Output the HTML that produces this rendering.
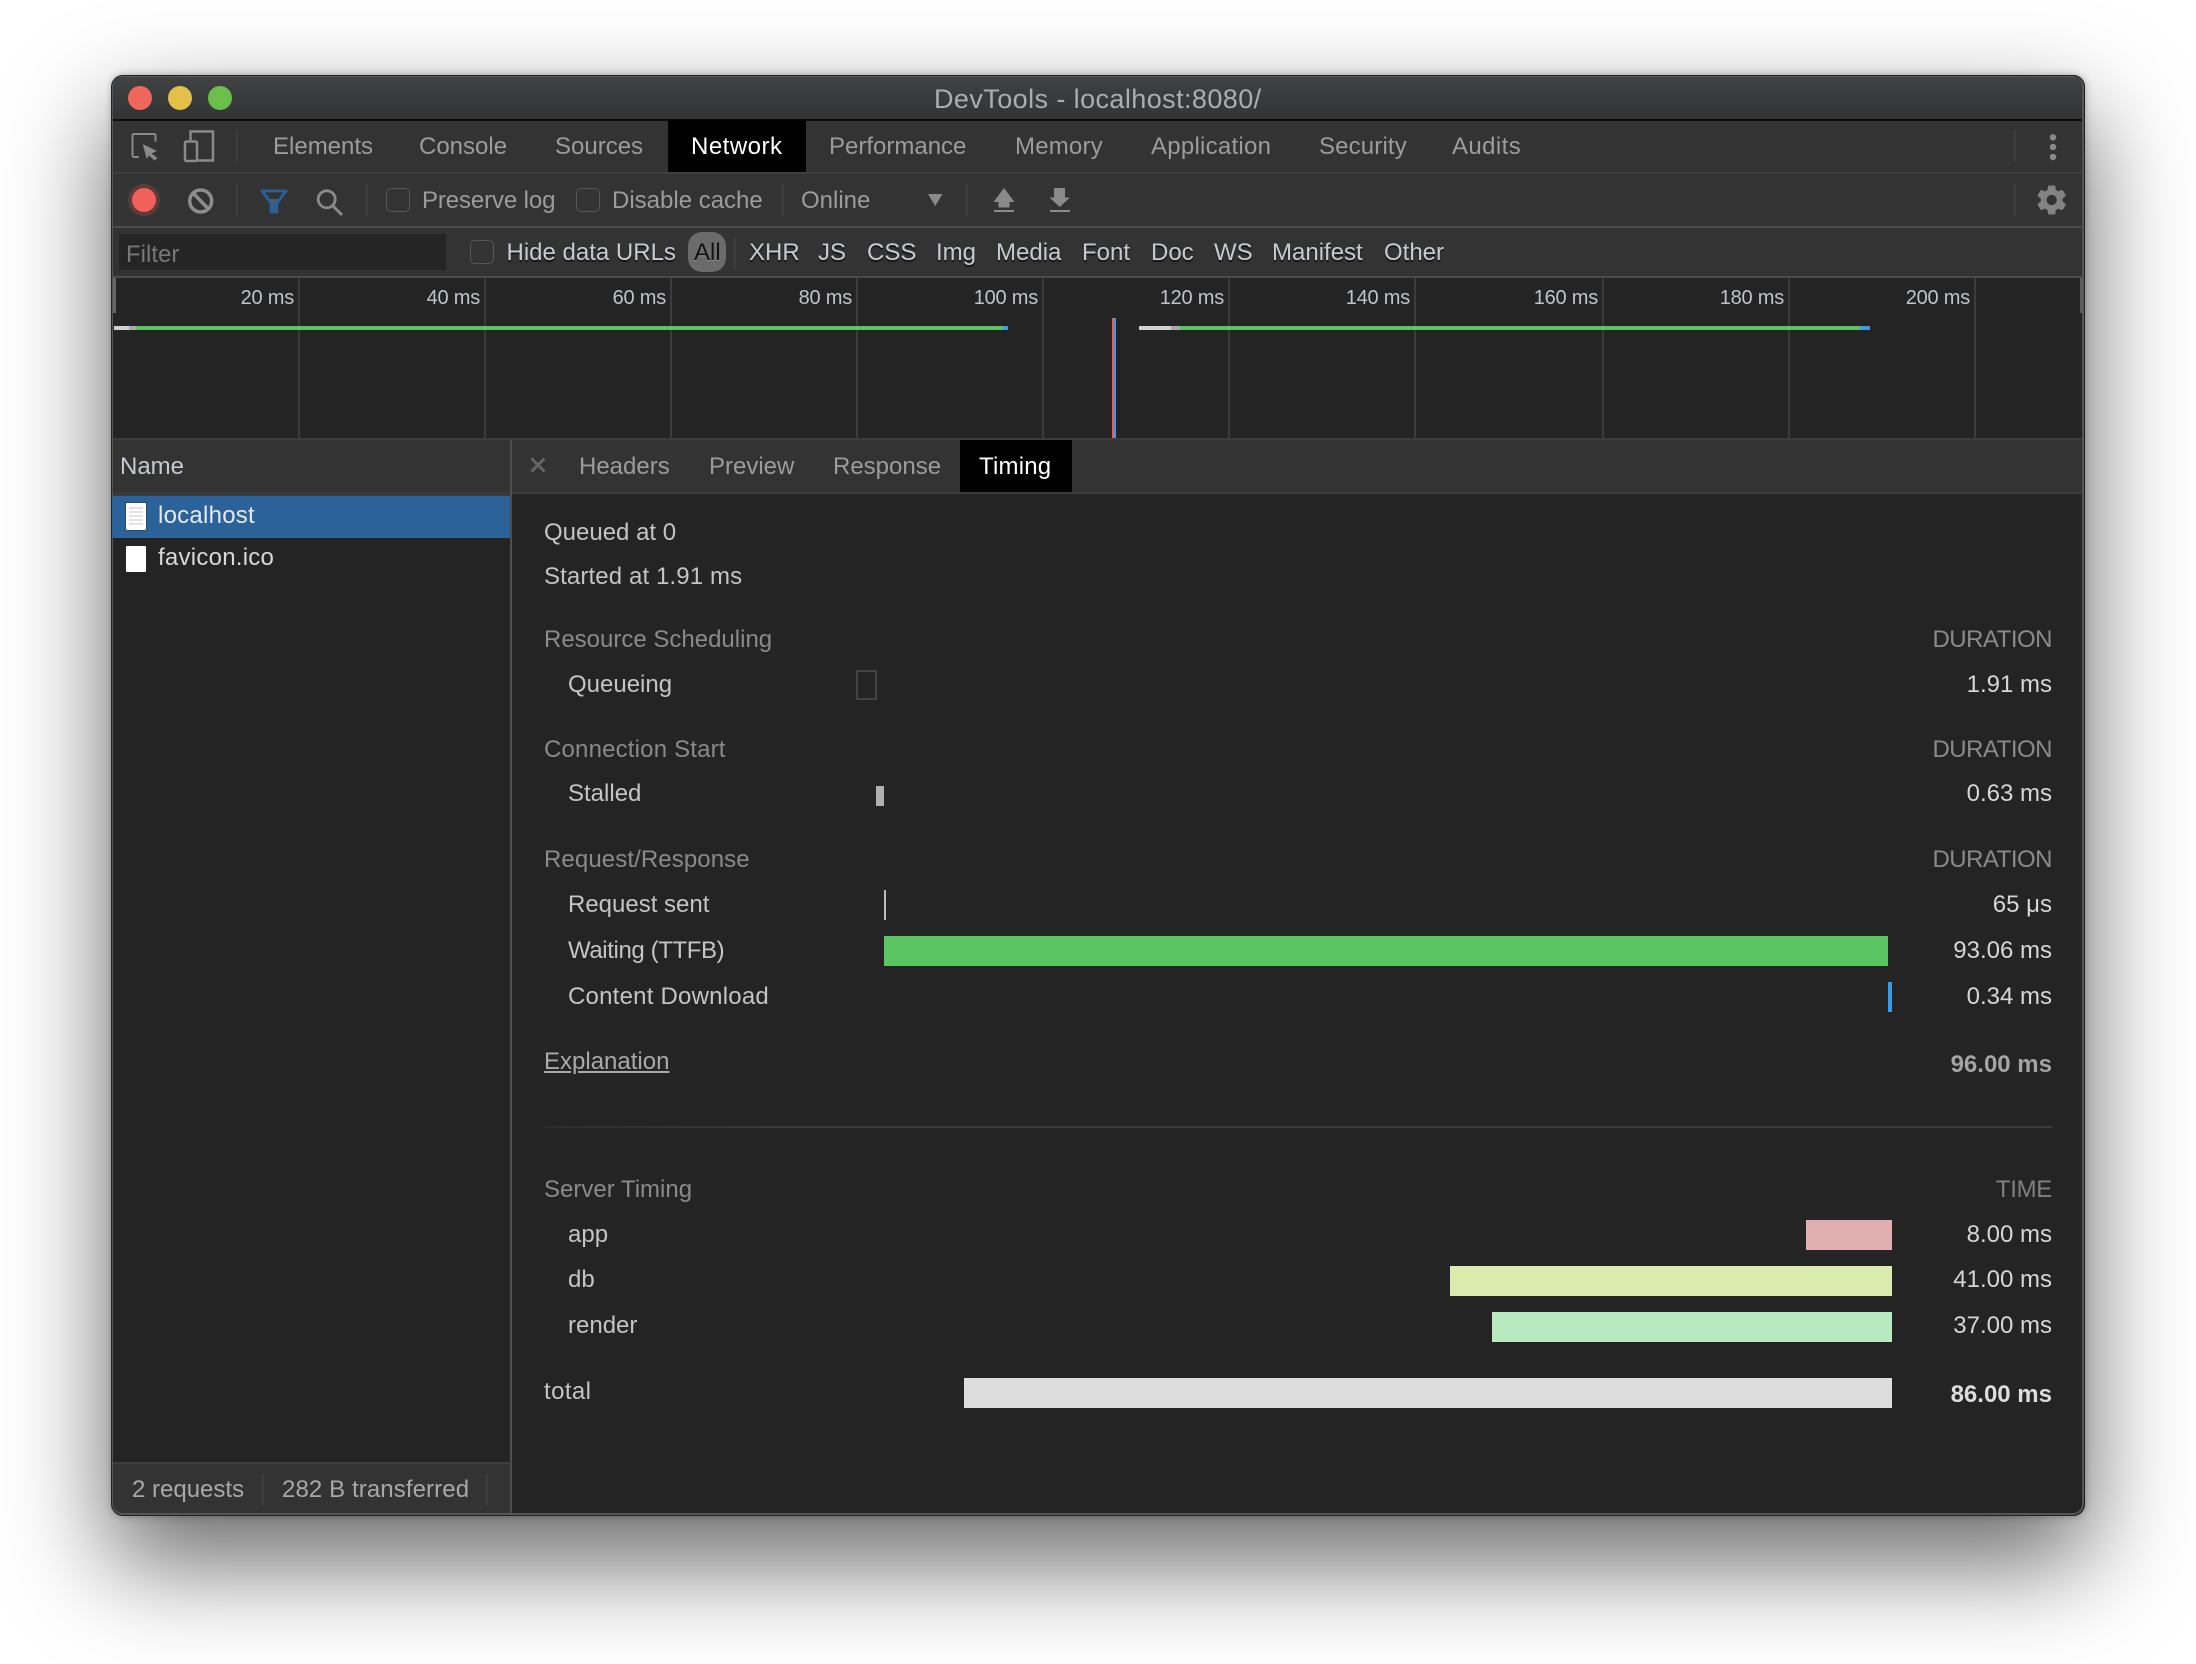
<!DOCTYPE html>
<html><head><meta charset="utf-8"><title>DevTools - localhost:8080/</title>
<style>
html,body{margin:0;padding:0;width:2196px;height:1664px;overflow:hidden;background:#fff;font-family:"Liberation Sans",Arial,sans-serif}
#p{position:relative;width:2196px;height:1664px;overflow:hidden}
.b{position:absolute}
.t{position:absolute;white-space:nowrap;font-size:24px;line-height:30px;color:#c4c4c4;margin-top:1px}
.tab{color:#9c9c9c}
.f{color:#c6cad2;text-shadow:0 2px 1px #161616}
.g{color:#8a8a8a}
.v{right:144px;color:#d6d6d6}
.d{letter-spacing:-.5px}
.ms{font-size:20px;color:#bfc3ca;top:282px;letter-spacing:-.22px}
.gl{position:absolute;top:278px;height:160px;width:2px;background:#3c3c3c}
.sep{position:absolute;width:2px;background:#3d3d3d}
.cb{position:absolute;width:22px;height:22px;border:1.5px solid #565656;border-radius:5px;background:#333}
</style></head><body><div id="p">

<!-- window -->
<div class="b" style="left:112px;top:75px;width:1973px;height:1441px;border-radius:12px;background:#242424;box-shadow:0 44px 100px 4px rgba(0,0,0,.58),0 0 8px rgba(0,0,0,.3)"></div>
<div id="w" class="b" style="left:112px;top:75px;width:1973px;height:1441px;border-radius:12px;overflow:hidden;background:#242424">
  <div class="b" style="left:0;top:0;right:0;height:44px;background:linear-gradient(#454648 0,#404143 4px,#323335)"></div>
  <div class="b" style="left:0;top:0;right:0;height:1px;background:#1a1a1a"></div>
  <div class="b" style="left:0;top:1px;right:0;height:1px;background:#5a5a5a"></div>
  <div class="b" style="left:0;top:44px;right:0;height:2px;background:#0d0d0d"></div>
  <div class="b" style="left:0;top:46px;right:0;height:52px;background:#333"></div>
  <div class="b" style="left:0;top:97px;right:0;height:2px;background:#3f3f3f"></div>
  <div class="b" style="left:0;top:99px;right:0;height:52px;background:#333"></div>
  <div class="b" style="left:0;top:151px;right:0;height:2px;background:#4a4a4a"></div>
  <div class="b" style="left:0;top:153px;right:0;height:48px;background:#333"></div>
  <div class="b" style="left:0;top:201px;right:0;height:2px;background:#4a4a4a"></div>
  <div class="b" style="left:0;top:363px;right:0;height:2px;background:#3c3c3c"></div>
  <div class="b" style="left:0;top:365px;right:0;height:53px;background:#333"></div>
  <div class="b" style="left:0;top:417px;width:398px;height:4px;background:#3a3a3a"></div>
  <div class="b" style="left:398px;top:417px;right:0;height:2px;background:#3c3c3c"></div>
  <div class="b" style="left:0;top:1387px;width:398px;height:2px;background:#3e3e3e"></div>
  <div class="b" style="left:0;top:1389px;width:398px;height:52px;background:#333"></div>
  <div class="b" style="left:398px;top:365px;width:2px;height:1076px;background:#4e4e4e"></div>
</div>
<!-- window edges -->
<div class="b" style="left:111px;top:75px;width:1972px;height:1439px;border-radius:12px;border:1px solid #222;pointer-events:none"></div>
<div class="b" style="left:112px;top:76px;width:1969px;height:1437px;border-radius:11px;border:2px solid #555;border-top:0;border-left-width:1px;pointer-events:none"></div>

<!-- traffic lights -->
<div class="b" style="left:128px;top:86px;width:24px;height:24px;border-radius:50%;background:#ef675c"></div>
<div class="b" style="left:168px;top:86px;width:24px;height:24px;border-radius:50%;background:#e2c049"></div>
<div class="b" style="left:208px;top:86px;width:24px;height:24px;border-radius:50%;background:#6cbf4b"></div>
<div class="t" style="left:934px;top:84px;margin-top:0;font-size:27px;color:#adadad;letter-spacing:.42px">DevTools - localhost:8080/</div>

<!-- tab strip -->
<div class="b" style="left:668px;top:120px;width:138px;height:52px;background:#000"></div>
<div class="t tab" style="left:273px;top:131px">Elements</div>
<div class="t tab" style="left:419px;top:131px">Console</div>
<div class="t tab" style="left:555px;top:131px">Sources</div>
<div class="t" style="left:691px;top:131px;color:#fff;letter-spacing:.5px">Network</div>
<div class="t tab" style="left:829px;top:131px">Performance</div>
<div class="t tab" style="left:1015px;top:131px;letter-spacing:.2px">Memory</div>
<div class="t tab" style="left:1151px;top:131px;letter-spacing:.25px">Application</div>
<div class="t tab" style="left:1319px;top:131px;letter-spacing:.15px">Security</div>
<div class="t tab" style="left:1452px;top:131px;letter-spacing:.4px">Audits</div>
<div class="sep" style="left:236px;top:130px;height:32px"></div>
<div class="sep" style="left:2014px;top:130px;height:32px"></div>

<!-- toolbar -->
<div class="sep" style="left:236px;top:184px;height:32px"></div>
<div class="sep" style="left:366px;top:184px;height:32px"></div>
<div class="sep" style="left:782px;top:184px;height:32px"></div>
<div class="sep" style="left:966px;top:184px;height:32px"></div>
<div class="sep" style="left:2014px;top:184px;height:32px"></div>
<div class="cb" style="left:386px;top:188px"></div>
<div class="t tab" style="left:422px;top:185px;letter-spacing:-.12px">Preserve log</div>
<div class="cb" style="left:576px;top:188px"></div>
<div class="t tab" style="left:612px;top:185px">Disable cache</div>
<div class="t tab" style="left:801px;top:185px">Online</div>

<!-- filter bar -->
<div class="b" style="left:119px;top:234px;width:327px;height:36px;background:#252525"></div>
<div class="t" style="left:126px;top:239px;color:#777">Filter</div>
<div class="cb" style="left:470px;top:240px"></div>
<div class="t f" style="left:506.500px;top:237px">Hide data URLs</div>
<div class="b" style="left:688px;top:232px;width:38px;height:40px;border-radius:14px;background:#6b6b6b"></div>
<div class="t" style="left:694px;top:237px;color:#111;text-shadow:0 1px 0 #999">All</div>
<div class="sep" style="left:734px;top:237px;height:32px"></div>
<div class="t f" style="left:749px;top:237px">XHR</div>
<div class="t f" style="left:818px;top:237px">JS</div>
<div class="t f" style="left:867px;top:237px">CSS</div>
<div class="t f" style="left:936px;top:237px">Img</div>
<div class="t f" style="left:996px;top:237px">Media</div>
<div class="t f" style="left:1082px;top:237px">Font</div>
<div class="t f" style="left:1151px;top:237px">Doc</div>
<div class="t f" style="left:1214px;top:237px">WS</div>
<div class="t f" style="left:1272px;top:237px">Manifest</div>
<div class="t f" style="left:1384px;top:237px">Other</div>

<!-- timeline -->
<div class="gl" style="left:298px"></div><div class="gl" style="left:484px"></div><div class="gl" style="left:670px"></div><div class="gl" style="left:856px"></div><div class="gl" style="left:1042px"></div><div class="gl" style="left:1228px"></div><div class="gl" style="left:1414px"></div><div class="gl" style="left:1602px"></div><div class="gl" style="left:1788px"></div><div class="gl" style="left:1974px"></div>
<div class="b" style="left:113px;top:278px;width:3px;height:35px;background:#666"></div>
<div class="b" style="left:2080px;top:278px;width:3px;height:35px;background:#5c5c5c"></div>
<div class="t ms" style="right:1902px">20 ms</div>
<div class="t ms" style="right:1716px">40 ms</div>
<div class="t ms" style="right:1530px">60 ms</div>
<div class="t ms" style="right:1344px">80 ms</div>
<div class="t ms" style="right:1158px">100 ms</div>
<div class="t ms" style="right:972px">120 ms</div>
<div class="t ms" style="right:786px">140 ms</div>
<div class="t ms" style="right:598px">160 ms</div>
<div class="t ms" style="right:412px">180 ms</div>
<div class="t ms" style="right:226px">200 ms</div>
<div class="b" style="left:114px;top:326px;width:15px;height:4px;background:#d0d0d0"></div>
<div class="b" style="left:129px;top:326px;width:7px;height:4px;background:#a8a8a8"></div>
<div class="b" style="left:136px;top:326px;width:867px;height:4px;background:#5ac362"></div>
<div class="b" style="left:1003px;top:326px;width:5px;height:4px;background:#3f9be8"></div>
<div class="b" style="left:1139px;top:326px;width:32px;height:4px;background:#d0d0d0"></div>
<div class="b" style="left:1171px;top:326px;width:9px;height:4px;background:#a8a8a8"></div>
<div class="b" style="left:1180px;top:326px;width:680px;height:4px;background:#5ac362"></div>
<div class="b" style="left:1860px;top:326px;width:10px;height:4px;background:#3f9be8"></div>
<div class="b" style="left:1112px;top:318px;width:2px;height:120px;background:#e2605a"></div>
<div class="b" style="left:1114px;top:318px;width:2px;height:120px;background:#3f9be8"></div>

<!-- name column -->
<div class="t" style="left:120px;top:451px;color:#c6cad2">Name</div>
<div class="b" style="left:112px;top:496px;width:398px;height:42px;background:#2b6299"></div>
<div class="b" style="left:126px;top:503px;width:20px;height:27px;background:#fff;border-radius:1px;box-shadow:0 0 0 1px #26466b"></div>
<div class="b" style="left:129px;top:507px;width:14px;height:19px;background:repeating-linear-gradient(#e4e4e4 0,#e4e4e4 2px,#fff 2px,#fff 4px)"></div>
<div class="t" style="left:158px;top:500px;color:#e6eaf0;letter-spacing:.25px">localhost</div>
<div class="b" style="left:126px;top:546px;width:20px;height:26px;background:#fff;border-radius:1px"></div>
<div class="t" style="left:158px;top:542px;color:#d8d8d8;letter-spacing:.25px">favicon.ico</div>
<div class="t" style="left:132px;top:1474px;color:#a8a8a8">2 requests</div>
<div class="t" style="left:282px;top:1474px;color:#a8a8a8;letter-spacing:.1px">282 B transferred</div>
<div class="sep" style="left:262px;top:1474px;height:32px"></div>
<div class="sep" style="left:486px;top:1474px;height:32px"></div>

<!-- detail tabs -->
<div class="b" style="left:960px;top:440px;width:112px;height:52px;background:#000"></div>
<div class="t tab" style="left:579px;top:451px">Headers</div>
<div class="t tab" style="left:709px;top:451px">Preview</div>
<div class="t tab" style="left:833px;top:451px">Response</div>
<div class="t" style="left:979px;top:451px;color:#fff;letter-spacing:.2px">Timing</div>

<!-- timing -->
<div class="t" style="left:544px;top:517px">Queued at 0</div>
<div class="t" style="left:544px;top:561px;letter-spacing:.12px">Started at 1.91 ms</div>

<div class="t g" style="left:544px;top:624px">Resource Scheduling</div>
<div class="t g v d" style="top:624px;color:#8a8a8a">DURATION</div>
<div class="t" style="left:568px;top:669px">Queueing</div>
<div class="b" style="left:856px;top:670px;width:17px;height:26px;border:2px solid #444"></div>
<div class="t v" style="top:669px">1.91 ms</div>

<div class="t g" style="left:544px;top:734px;letter-spacing:.18px">Connection Start</div>
<div class="t g v d" style="top:734px;color:#8a8a8a">DURATION</div>
<div class="t" style="left:568px;top:778px">Stalled</div>
<div class="b" style="left:876px;top:786px;width:8px;height:20px;background:#b0b0b0"></div>
<div class="t v" style="top:778px">0.63 ms</div>

<div class="t g" style="left:544px;top:844px;letter-spacing:.1px">Request/Response</div>
<div class="t g v d" style="top:844px;color:#8a8a8a">DURATION</div>
<div class="t" style="left:568px;top:889px">Request sent</div>
<div class="b" style="left:884px;top:890px;width:2px;height:30px;background:#bbb"></div>
<div class="t v" style="top:889px">65 μs</div>
<div class="t" style="left:568px;top:935px;letter-spacing:-.4px">Waiting (TTFB)</div>
<div class="b" style="left:884px;top:936px;width:1004px;height:30px;background:#5bc564"></div>
<div class="t v" style="top:935px">93.06 ms</div>
<div class="t" style="left:568px;top:981px;letter-spacing:.22px">Content Download</div>
<div class="b" style="left:1888px;top:982px;width:4px;height:30px;background:#3c9ae6"></div>
<div class="t v" style="top:981px">0.34 ms</div>

<div class="t" style="left:544px;top:1046px;color:#aaa;text-decoration:underline">Explanation</div>
<div class="t v" style="top:1049px;color:#a4a4a4;font-weight:bold">96.00 ms</div>

<div class="b" style="left:544px;top:1126px;width:1508px;height:2px;background:linear-gradient(90deg,#2c2c2c,#3a3a3a 15%,#3a3a3a)"></div>

<div class="t g" style="left:544px;top:1174px">Server Timing</div>
<div class="t g v" style="top:1174px;color:#808080;letter-spacing:-.3px">TIME</div>
<div class="t" style="left:568px;top:1219px">app</div>
<div class="b" style="left:1806px;top:1220px;width:86px;height:30px;background:#e0aeae"></div>
<div class="t v" style="top:1219px">8.00 ms</div>
<div class="t" style="left:568px;top:1264px">db</div>
<div class="b" style="left:1450px;top:1266px;width:442px;height:30px;background:#dcebb0"></div>
<div class="t v" style="top:1264px">41.00 ms</div>
<div class="t" style="left:568px;top:1310px">render</div>
<div class="b" style="left:1492px;top:1312px;width:400px;height:30px;background:#b9eabf"></div>
<div class="t v" style="top:1310px">37.00 ms</div>
<div class="t" style="left:544px;top:1376px;letter-spacing:.4px">total</div>
<div class="b" style="left:964px;top:1378px;width:928px;height:30px;background:#ddd"></div>
<div class="t v" style="top:1379px;color:#ddd;font-weight:bold">86.00 ms</div>

<!-- icons -->
<svg class="b" style="left:0;top:0" width="2196" height="1664" viewBox="0 0 2196 1664" fill="none">
  <path d="M139 157h-5a1.500 1.500 0 0 1-1.500-1.500v-20a1.500 1.500 0 0 1 1.500-1.500h20a1.500 1.500 0 0 1 1.500 1.500v6" stroke="#8a8a8a" stroke-width="2"/>
  <path d="M142.700 144L157 151L151.500 153.500L157.500 158L154.500 160.500L149 155.500L146.700 159Z" fill="#8a8a8a"/>
  <path d="M190.500 140V131.500H213V160.500H197" stroke="#8a8a8a" stroke-width="2.500"/>
  <rect x="185" y="141.500" width="12" height="19.500" rx="1.500" stroke="#8a8a8a" stroke-width="2.500"/>
  <circle cx="144" cy="200" r="16" fill="#f15f58" opacity=".22"/>
  <circle cx="144" cy="200" r="12" fill="#f15f58"/>
  <circle cx="200.700" cy="201" r="11" stroke="#8d8d8d" stroke-width="3.500"/>
  <path d="M193 193L208.500 209" stroke="#8d8d8d" stroke-width="3.500"/>
  <path d="M267.500 199H280.500L276.500 204V212H271.500V204Z" fill="#3f5d7e"/>
  <path d="M262 191H286L277 203V212H271V203Z" stroke="#2a6099" stroke-width="2.800" stroke-linejoin="round"/>
  <circle cx="326.700" cy="199.300" r="8.500" stroke="#8a8a8a" stroke-width="2.800"/>
  <path d="M332.500 205.500L342 215" stroke="#8a8a8a" stroke-width="3"/>
  <path d="M932 459L544 471M0 0" stroke="none"/>
  <path d="M531.500 458.500L544.500 471.500M544.500 458.500L531.500 471.500" stroke="#666" stroke-width="2.800"/>
  <path d="M928 194H942.500L935.200 206Z" fill="#8a8a8a"/>
  <path d="M1004 188L1014.500 202H1009.500V207.500H998.500V202H993.500Z" fill="#8a8a8a"/>
  <rect x="994" y="210" width="20" height="2" fill="#8a8a8a"/>
  <path d="M1054 188H1065V197.500H1070L1059.700 207L1049.500 197.500H1054Z" fill="#8a8a8a"/>
  <rect x="1050" y="210" width="20" height="2" fill="#8a8a8a"/>
  <circle cx="2053" cy="137.300" r="3.200" fill="#8a8a8a"/>
  <circle cx="2053" cy="147" r="3.200" fill="#8a8a8a"/>
  <circle cx="2053" cy="157" r="3.200" fill="#8a8a8a"/>
  <path transform="translate(2051.700 200) scale(1.450) translate(-12 -12)" fill="#838383" d="M19.430 12.980c.04-.32.07-.64.07-.98s-.03-.66-.07-.98l2.110-1.650c.19-.15.24-.42.12-.64l-2-3.460c-.12-.22-.39-.3-.61-.22l-2.490 1c-.52-.4-1.080-.73-1.690-.98l-.38-2.650C14.460 2.180 14.250 2 14 2h-4c-.25 0-.46.18-.49.42l-.38 2.650c-.61.25-1.170.59-1.690.98l-2.490-1c-.23-.09-.49 0-.61.22l-2 3.460c-.13.22-.07.49.12.64l2.110 1.650c-.04.32-.07.65-.07.98s.03.66.07.98l-2.110 1.650c-.19.15-.24.42-.12.64l2 3.460c.12.22.39.3.61.22l2.490-1c.52.4 1.080.73 1.690.98l.38 2.650c.03.24.24.42.49.42h4c.25 0 .46-.18.49-.42l.38-2.650c.61-.25 1.170-.59 1.690-.98l2.490 1c.23.09.49 0 .61-.22l2-3.460c.12-.22.07-.49-.12-.64l-2.110-1.650zM12 15.500c-1.930 0-3.500-1.570-3.500-3.500s1.570-3.500 3.500-3.500 3.500 1.570 3.500 3.500-1.570 3.500-3.500 3.500z"/>
</svg>
</div></body></html>
